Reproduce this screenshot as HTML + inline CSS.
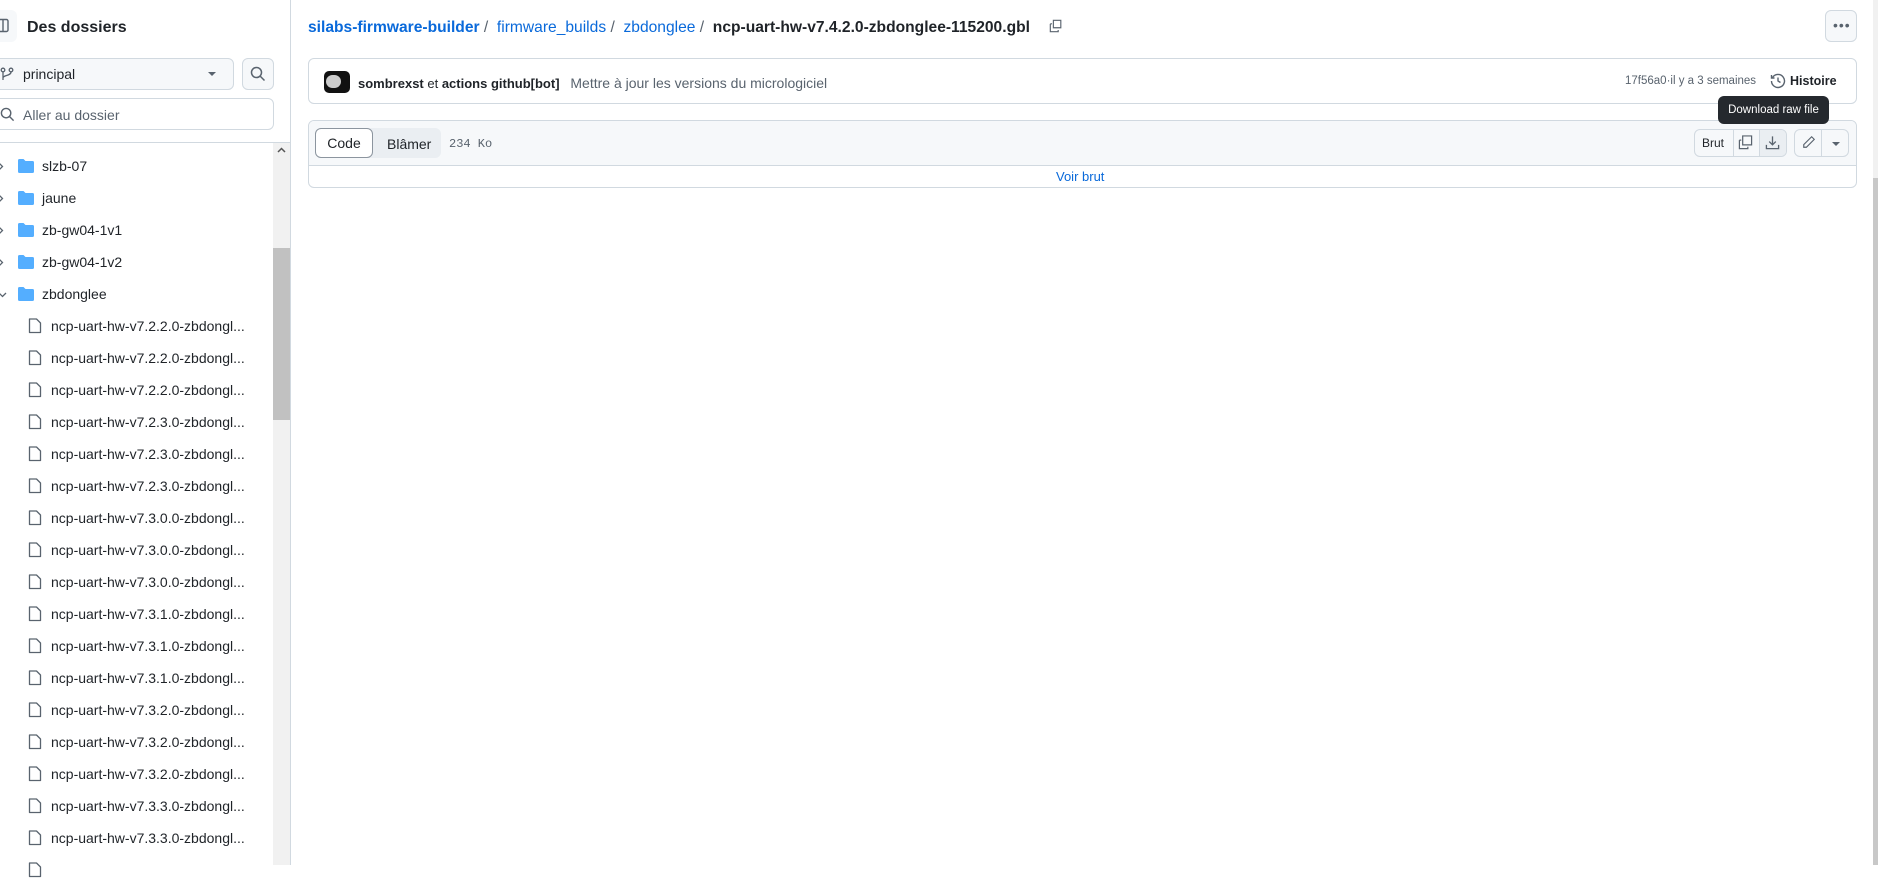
<!DOCTYPE html>
<html><head><meta charset="utf-8"><style>
*{box-sizing:border-box;margin:0;padding:0}
body{width:1878px;height:865px;overflow:hidden;background:#fff;font-family:"Liberation Sans",sans-serif;color:#1f2328;position:relative;font-size:14px}
.a{position:absolute}
.btn{position:absolute;border:1px solid #d1d9e0;border-radius:6px;background:#f6f8fa}
svg{display:block}
.row{position:absolute;left:0;height:32px;width:273px;display:flex;align-items:center;font-size:14px;white-space:nowrap}
.link{color:#0969da}
</style></head><body>
<div class="a" style="left:290px;top:0;width:1px;height:865px;background:#d1d9e0"></div>
<div class="a" style="left:0;top:10px;width:17px;height:32px;background:#f6f8fa;border-radius:0 6px 6px 0"></div>
<svg class="a" style="left:0;top:18px" width="10" height="16" viewBox="0 0 10 16"><rect x="-6" y="1.5" width="14" height="12" rx="1.5" fill="none" stroke="#59636e" stroke-width="1.4"/><line x1="3" y1="2" x2="3" y2="13" stroke="#59636e" stroke-width="1.4"/></svg>
<div class="a" style="left:27px;top:19px;font-size:16px;font-weight:bold">Des dossiers</div>
<div class="btn" style="left:-6px;top:58px;width:240px;height:32px"></div>
<svg class="a" style="left:0;top:67px" width="14" height="14" viewBox="0 0 14 14"><circle cx="3" cy="3" r="1.8" fill="none" stroke="#59636e" stroke-width="1.3"/><circle cx="11" cy="3" r="1.8" fill="none" stroke="#59636e" stroke-width="1.3"/><path d="M3 5v8M11 5c0 4-8 3-8 6" fill="none" stroke="#59636e" stroke-width="1.3"/></svg>
<div class="a" style="left:23px;top:66px;font-size:14px">principal</div>
<div class="a" style="left:208px;top:72px;border-left:4px solid transparent;border-right:4px solid transparent;border-top:4px solid #59636e"></div>
<div class="btn" style="left:242px;top:58px;width:32px;height:32px"></div>
<svg class="a" style="left:250px;top:66px" width="16" height="16" viewBox="0 0 16 16"><circle cx="6.5" cy="6.5" r="5" fill="none" stroke="#59636e" stroke-width="1.5"/><path d="M10 10l4.5 4.5" stroke="#59636e" stroke-width="1.5"/></svg>
<div class="a" style="left:-6px;top:98px;width:280px;height:32px;border:1px solid #d1d9e0;border-radius:6px;background:#fff"></div>
<svg class="a" style="left:0;top:107px" width="15" height="15" viewBox="0 0 16 16"><circle cx="6.5" cy="6.5" r="5" fill="none" stroke="#59636e" stroke-width="1.5"/><path d="M10 10l4.5 4.5" stroke="#59636e" stroke-width="1.5"/></svg>
<div class="a" style="left:23px;top:107px;font-size:14px;color:#59636e">Aller au dossier</div>
<div class="a" style="left:0;top:142px;width:290px;height:1px;background:#d1d9e0"></div>
<div id="tree"></div>
<div class="a" style="left:273px;top:143px;width:17px;height:722px;background:#f1f1f1"></div>
<div class="a" style="left:273px;top:248px;width:17px;height:172px;background:#c1c1c1"></div>
<svg class="a" style="left:277px;top:147px" width="9" height="6" viewBox="0 0 9 6"><path d="M1 5l3.5-3.5L8 5" fill="none" stroke="#555" stroke-width="1.5"/></svg>
<div class="a" style="left:308px;top:19px;font-size:15.6px;white-space:nowrap"><span class="link" style="font-weight:bold">silabs-firmware-builder</span><span style="color:#59636e"> / </span>&nbsp;<span class="link">firmware_builds</span><span style="color:#59636e"> / </span>&nbsp;<span class="link">zbdonglee</span><span style="color:#59636e"> / </span>&nbsp;<b>ncp-uart-hw-v7.4.2.0-zbdonglee-115200.gbl</b></div>
<svg class="a" style="left:1049px;top:19px" width="14" height="14" viewBox="0 0 16 16"><path d="M5 1.5h8.5v8.5H5z M1.5 5.5h2M1.5 5.5v9h9v-2" fill="none" stroke="#59636e" stroke-width="1.3"/></svg>
<div class="btn" style="left:1825px;top:10px;width:32px;height:32px"></div>
<div class="a" style="left:1833px;top:17px;font-size:14px;color:#59636e;letter-spacing:1px">•••</div>
<div class="a" style="left:308px;top:58px;width:1549px;height:46px;border:1px solid #d1d9e0;border-radius:6px"></div>
<div class="a" style="left:324px;top:71px;width:26px;height:22px;border-radius:5px;background:#111;overflow:hidden"><div style="margin:4px 0 0 2px;width:15px;height:13px;background:#ccc;border-radius:7px"></div></div>
<div class="a" style="left:358px;top:75px;font-size:13px;white-space:nowrap"><b>sombrexst</b> et <b>actions github[bot]</b>&nbsp;&nbsp; <span style="color:#59636e;font-size:14px">Mettre à jour les versions du micrologiciel</span></div>
<div class="a" style="left:1625px;top:75px;font-size:11.5px;color:#59636e">17f56a0·il y a 3 semaines</div>
<svg class="a" style="left:1770px;top:73px" width="16" height="16" viewBox="0 0 16 16"><path d="M2.5 4.5A6.5 6.5 0 1 1 1.5 8" fill="none" stroke="#59636e" stroke-width="1.4"/><path d="M1.5 2v3h3" fill="none" stroke="#59636e" stroke-width="1.4"/><path d="M8 4.5V8l2.5 1.5" fill="none" stroke="#59636e" stroke-width="1.4"/></svg>
<div class="a" style="left:1790px;top:74px;font-size:12.5px;font-weight:bold;color:#1f2328">Histoire</div>
<div class="a" style="left:308px;top:120px;width:1549px;height:68px;border:1px solid #d1d9e0;border-radius:6px;overflow:hidden"><div style="height:45px;background:#f6f8fa;border-bottom:1px solid #d1d9e0"></div></div>
<div class="a" style="left:315px;top:128px;width:126px;height:30px;background:#eaeef2;border-radius:6px"></div>
<div class="a" style="left:315px;top:128px;width:58px;height:30px;background:#fff;border:1px solid #8c959f;border-radius:6px;font-size:14px;text-align:center;line-height:28px">Code</div>
<div class="a" style="left:387px;top:136px;font-size:14px">Blâmer</div>
<div class="a" style="left:449px;top:137px;font-size:12px;font-family:'Liberation Mono',monospace;color:#59636e">234 Ko</div>
<div class="btn" style="left:1694px;top:129px;width:93px;height:28px;overflow:hidden"><div style="position:absolute;left:64px;top:0;width:29px;height:28px;background:#eaeef2"></div><div style="position:absolute;left:38px;top:0;width:1px;height:28px;background:#d1d9e0"></div><div style="position:absolute;left:64px;top:0;width:1px;height:28px;background:#d1d9e0"></div></div>
<div class="a" style="left:1702px;top:136px;font-size:12px">Brut</div>
<svg class="a" style="left:1738px;top:135px" width="15" height="15" viewBox="0 0 16 16"><path d="M5 1h9.5v9.5H5z M1.5 5.5h2M1.5 5.5v9h9v-2" fill="none" stroke="#59636e" stroke-width="1.3"/></svg>
<svg class="a" style="left:1765px;top:135px" width="15" height="15" viewBox="0 0 16 16"><path d="M8 1.5v9M4.5 7l3.5 3.5L11.5 7M1.5 10.5v4h13v-4" fill="none" stroke="#59636e" stroke-width="1.4"/></svg>
<div class="btn" style="left:1794px;top:129px;width:55px;height:28px"><div style="position:absolute;left:26px;top:0;width:1px;height:26px;background:#d1d9e0"></div></div>
<svg class="a" style="left:1802px;top:135px" width="14" height="14" viewBox="0 0 16 16"><path d="M11 2l3 3-9 9H2v-3z" fill="none" stroke="#59636e" stroke-width="1.3"/></svg>
<div class="a" style="left:1832px;top:142px;border-left:4px solid transparent;border-right:4px solid transparent;border-top:4px solid #59636e"></div>
<div class="a" style="left:1718px;top:96px;width:111px;height:28px;background:#25292e;border-radius:6px;color:#fff;font-size:11.5px;line-height:28px;text-align:center">Download raw file</div>
<div class="a link" style="left:1056px;top:169px;font-size:13px">Voir brut</div>
<div class="a" style="left:1873px;top:0;width:5px;height:865px;background:#f1f1f1"></div>
<div class="a" style="left:1873px;top:178px;width:5px;height:687px;background:#c8c8c8"></div>
<script>
var h='';var folders=['slzb-07','jaune','zb-gw04-1v1','zb-gw04-1v2','zbdonglee'];
var fold='<svg width="16" height="14" viewBox="0 0 16 14" style="margin:0 8px 0 18px"><path d="M0 1.5A1.5 1.5 0 0 1 1.5 0h4l2 2h7A1.5 1.5 0 0 1 16 3.5v9a1.5 1.5 0 0 1-1.5 1.5h-13A1.5 1.5 0 0 1 0 12.5z" fill="#54aeff"/></svg>';
folders.forEach(function(f,i){var y=150+32*i;var ch=i<4?'<svg class="a" style="left:-2px;top:12px" width="6" height="9" viewBox="0 0 6 9"><path d="M1 1l3.5 3.5L1 8" fill="none" stroke="#59636e" stroke-width="1.3"/></svg>':'<svg class="a" style="left:-2px;top:14px" width="9" height="6" viewBox="0 0 9 6"><path d="M1 1l3.5 3.5L8 1" fill="none" stroke="#59636e" stroke-width="1.3"/></svg>';h+='<div class="row" style="top:'+y+'px">'+ch+fold+f+'</div>';});
var v=['7.2.2.0','7.2.2.0','7.2.2.0','7.2.3.0','7.2.3.0','7.2.3.0','7.3.0.0','7.3.0.0','7.3.0.0','7.3.1.0','7.3.1.0','7.3.1.0','7.3.2.0','7.3.2.0','7.3.2.0','7.3.3.0','7.3.3.0'];
var file='<svg width="14" height="16" viewBox="0 0 14 16" style="margin:0 9px 0 28px"><path d="M1.5 1h7l4 4v9.5h-11z" fill="none" stroke="#59636e" stroke-width="1.3" stroke-linejoin="round"/></svg>';
v.forEach(function(x,i){var y=310+32*i;h+='<div class="row" style="top:'+y+'px">'+file+'ncp-uart-hw-v'+x+'-zbdongl...</div>';});
h+='<div class="row" style="top:854px">'+file+'</div>';
document.getElementById('tree').innerHTML=h;
</script>
</body></html>
